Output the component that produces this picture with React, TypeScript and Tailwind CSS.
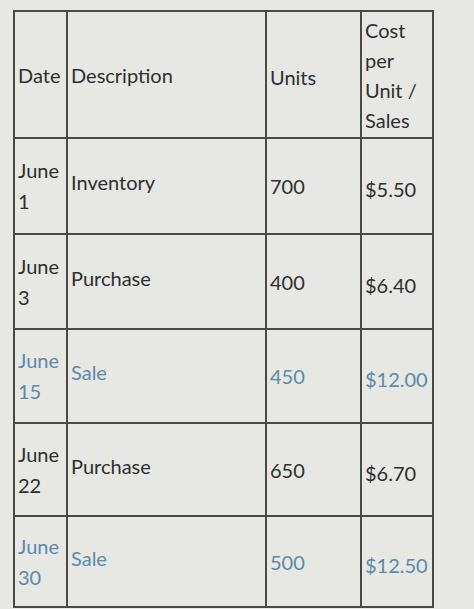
const rows = [
  { date: ['June', '1'], desc: 'Inventory', units: '700', cost: '$5.50', sale: false, h: 'h-[96px]' },
  { date: ['June', '3'], desc: 'Purchase', units: '400', cost: '$6.40', sale: false, h: 'h-[95px]' },
  { date: ['June', '15'], desc: 'Sale', units: '450', cost: '$12.00', sale: true, h: 'h-[94px]' },
  { date: ['June', '22'], desc: 'Purchase', units: '650', cost: '$6.70', sale: false, h: 'h-[93px]' },
  { date: ['June', '30'], desc: 'Sale', units: '500', cost: '$12.50', sale: true, h: 'h-[91px]' },
];

const cell = 'border-2 border-[#4a4a4a] px-[3px] align-middle text-left font-normal';

export default function App() {
  return (
    <div
      className="w-[474px] h-[609px] overflow-hidden bg-[#e7e7e4] pt-[10px] pl-[13px] text-[20px] leading-[30px] text-[#2f2f2f]"
      style={{ fontFamily: 'Lato, "Open Sans", sans-serif' }}
    >
      <table className="border-collapse table-fixed w-[419px]">
        <colgroup>
          <col className="w-[53px]" />
          <col className="w-[199px]" />
          <col className="w-[95px]" />
          <col className="w-[72px]" />
        </colgroup>
        <thead>
          <tr className="h-[127px]">
            <th className={cell}>Date</th>
            <th className={cell}>Description</th>
            <th className={`${cell} pt-[4px]`}>Units</th>
            <th className={cell}>
              Cost
              <br />
              per
              <br />
              Unit /
              <br />
              Sales
            </th>
          </tr>
        </thead>
        <tbody>
          {rows.map((r) => {
            const tone = r.sale ? 'text-[#5b8aaa]' : '';
            return (
              <tr key={r.date[1]} className={r.h}>
                <td className={`${cell} ${tone} leading-[31px]`}>
                  {r.date[0]}
                  <br />
                  {r.date[1]}
                </td>
                <td className={`${cell} ${tone} pb-[8px]`}>{r.desc}</td>
                <td className={`${cell} ${tone}`}>{r.units}</td>
                <td className={`${cell} ${tone} pt-[6px]`}>{r.cost}</td>
              </tr>
            );
          })}
        </tbody>
      </table>
    </div>
  );
}
